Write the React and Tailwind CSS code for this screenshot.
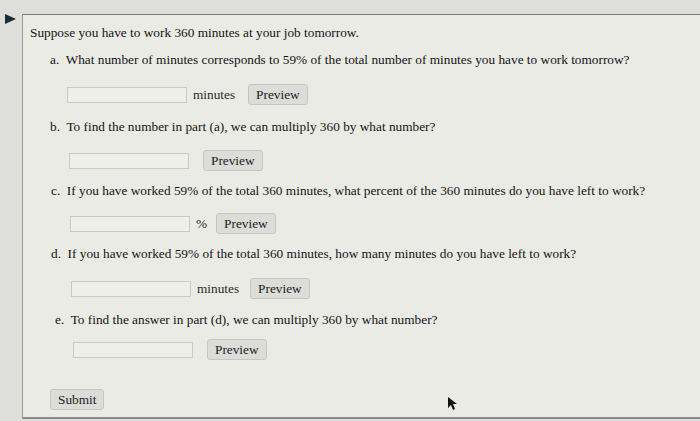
import React from "react";

const serif = { fontFamily: '"Liberation Serif", "Times New Roman", serif' };

function Input({ cls = "" }) {
  return (
    <div className={"h-[16px] w-[120px] border border-[#c9c9c5] bg-[#eeeeea] " + cls} />
  );
}

function Btn({ children, cls = "" }) {
  return (
    <div
      className={
        "flex h-[21px] items-center justify-center rounded-[3px] border border-[#c6c6c2] bg-[#dcdcd8] px-[7px] text-[13.3px] text-[#222] " +
        cls
      }
    >
      {children}
    </div>
  );
}

export default function App() {
  return (
    <div
      className="relative flex h-[421px] w-[700px] overflow-hidden bg-[#dededa] text-[#141414]"
      style={serif}
    >
      <div className="w-[22px] shrink-0 pt-[14px] pl-[5px]">
        <svg width="11" height="10" viewBox="0 0 11 10">
          <polygon points="0,0 11,5 0,10" fill="#1f2a38" />
        </svg>
      </div>
      <div className="mt-[14px] mb-[2px] flex flex-1 flex-col border-t-[1.5px] border-l-[1.5px] border-b-[2px] border-t-[#7d7d7a] border-l-[#9a9a96] border-b-[#8a8a90] bg-[#ebebe6] pl-[7px] text-[13.3px] leading-[18px]">
        <div className="mt-[9px]">Suppose you have to work 360 minutes at your job tomorrow.</div>

        <div className="mt-[9px] pl-[20px]">
          a.&nbsp; What number of minutes corresponds to 59% of the total number of minutes you have to work tomorrow?
        </div>
        <div className="mt-[15px] flex items-center pl-[37px]">
          <Input />
          <span className="ml-[6px] text-[#2a2a2a]">minutes</span>
          <Btn cls="ml-[13px]">Preview</Btn>
        </div>

        <div className="mt-[13px] pl-[20px]">
          b.&nbsp; To find the number in part (a), we can multiply 360 by what number?
        </div>
        <div className="mt-[14px] flex items-center pl-[39px]">
          <Input />
          <Btn cls="ml-[14px]">Preview</Btn>
        </div>

        <div className="mt-[11px] pl-[21px]">
          c.&nbsp; If you have worked 59% of the total 360 minutes, what percent of the 360 minutes do you have left to work?
        </div>
        <div className="mt-[13px] flex items-center pl-[40px]">
          <Input />
          <span className="ml-[6px] text-[#2a2a2a]">%</span>
          <Btn cls="ml-[9px]">Preview</Btn>
        </div>

        <div className="mt-[11px] pl-[21px]">
          d.&nbsp; If you have worked 59% of the total 360 minutes, how many minutes do you have left to work?
        </div>
        <div className="mt-[15px] flex items-center pl-[41px]">
          <Input />
          <span className="ml-[6px] text-[#2a2a2a]">minutes</span>
          <Btn cls="ml-[11px]">Preview</Btn>
        </div>

        <div className="mt-[12px] pl-[25px]">
          e.&nbsp; To find the answer in part (d), we can multiply 360 by what number?
        </div>
        <div className="mt-[10px] flex items-center pl-[43px]">
          <Input />
          <Btn cls="ml-[14px]">Preview</Btn>
        </div>

        <div className="mt-[29px] flex pl-[20px]">
          <Btn cls="h-[20px] px-[6px] text-[12.5px]">Submit</Btn>
        </div>
      </div>
      <svg
        className="absolute left-[448px] top-[397px]"
        width="10"
        height="15"
        viewBox="0 0 10 15"
      >
        <polygon points="0,0 0,11 3,8 5,13 7,12 5,7 9,7" fill="#111" />
      </svg>
    </div>
  );
}
